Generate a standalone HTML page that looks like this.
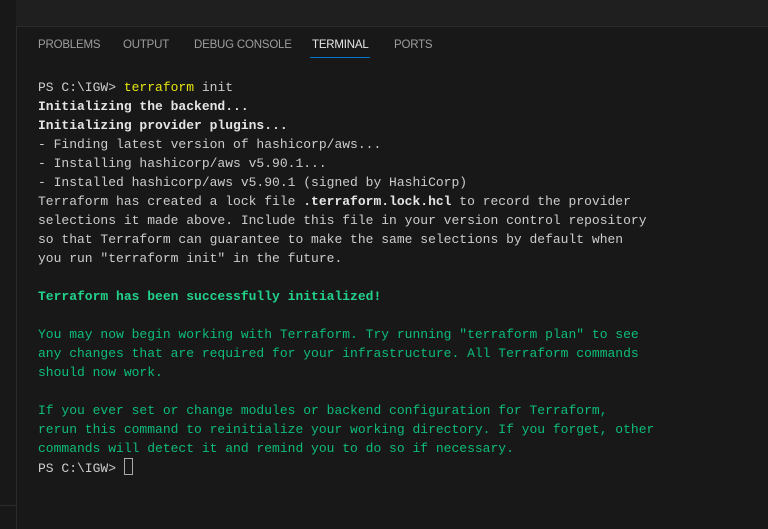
<!DOCTYPE html>
<html><head><style>
body{margin:0;width:768px;height:529px;background:#181818;overflow:hidden;position:relative;font-family:"Liberation Sans",sans-serif}
.top{position:absolute;left:16px;top:0;right:0;height:26px;background:#1f1f1f;border-bottom:1px solid #2b2b2b}
.left{position:absolute;left:0;top:0;width:16px;height:529px;background:#181818;border-right:1px solid #2b2b2b}
.lline{position:absolute;left:0;top:505px;width:16px;height:1px;background:#2b2b2b}
.tabs{position:absolute;top:39px;left:38px;font-size:11.5px;color:#9d9d9d;white-space:nowrap;letter-spacing:-0.2px}
.tabs span{position:absolute;top:0}
.ul{position:absolute;left:310px;top:57px;width:60px;height:1px;background:#0078d4}
pre{position:absolute;left:38px;top:78px;margin:0;font-family:"Liberation Mono",monospace;font-size:13px;line-height:19px;color:#cccccc}
b{color:#e5e5e5}
.y{color:#e5e510}.g{color:#0dbc79}.gb{color:#23d18b;font-weight:bold}
.cur{display:inline-block;width:7px;height:15px;border:1px solid #aaa;vertical-align:-3px}
</style></head><body>
<div class="left"></div><div class="lline"></div>
<div class="top"></div>
<div class="tabs"><span style="left:0">PROBLEMS</span><span style="left:85px">OUTPUT</span><span style="left:156px">DEBUG CONSOLE</span><span style="left:274px;color:#e7e7e7">TERMINAL</span><span style="left:356px">PORTS</span></div>
<div class="ul"></div>
<pre>PS C:\IGW&gt; <span class="y">terraform</span> init
<b>Initializing the backend...</b>
<b>Initializing provider plugins...</b>
- Finding latest version of hashicorp/aws...
- Installing hashicorp/aws v5.90.1...
- Installed hashicorp/aws v5.90.1 (signed by HashiCorp)
Terraform has created a lock file <b>.terraform.lock.hcl</b> to record the provider
selections it made above. Include this file in your version control repository
so that Terraform can guarantee to make the same selections by default when
you run "terraform init" in the future.

<span class="gb">Terraform has been successfully initialized!</span>

<span class="g">You may now begin working with Terraform. Try running "terraform plan" to see
any changes that are required for your infrastructure. All Terraform commands
should now work.

If you ever set or change modules or backend configuration for Terraform,
rerun this command to reinitialize your working directory. If you forget, other
commands will detect it and remind you to do so if necessary.</span>
PS C:\IGW&gt; <span class="cur"></span></pre>
</body></html>
